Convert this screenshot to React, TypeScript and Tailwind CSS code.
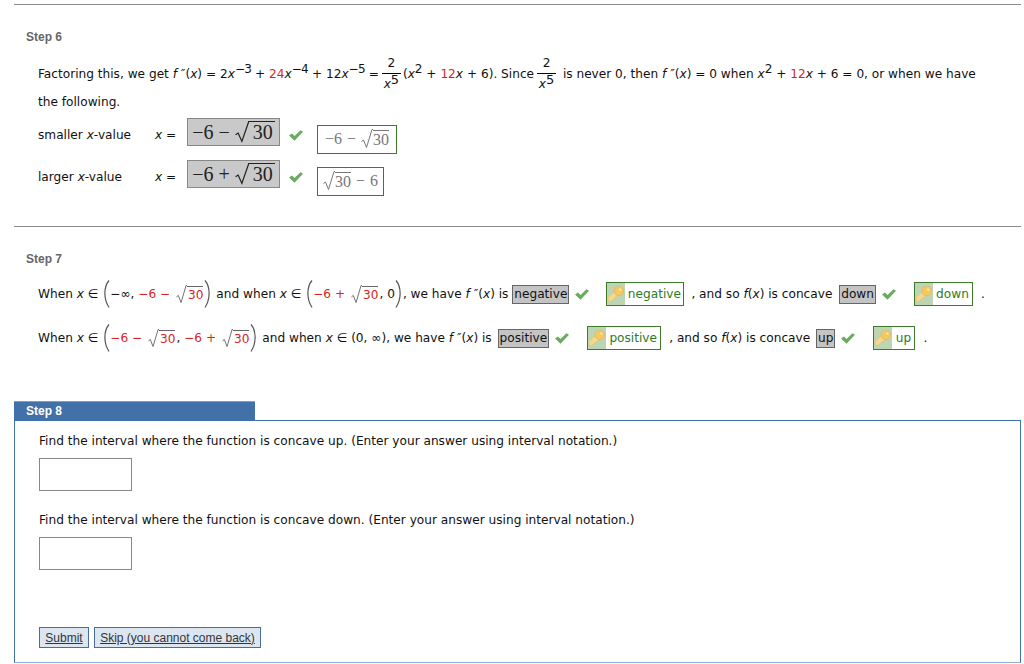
import type { ReactNode } from 'react';

const RED = 'text-[#d7261e]';

function Red({ children }: { children: ReactNode }) {
  return <span className={RED}>{children}</span>;
}

function I({ children }: { children: ReactNode }) {
  return <i>{children}</i>;
}

function Sup({ children }: { children: ReactNode }) {
  return <span className="relative -top-[5px] text-[12px] leading-none">{children}</span>;
}

function NegSup({ children }: { children: ReactNode }) {
  return <span className="relative -top-[5px] text-[12px] leading-none tracking-[-0.7px]">{children}</span>;
}

function Frac({ className = 'mx-[3px]' }: { className?: string }) {
  return (
    <span className={`inline-flex w-[19px] flex-col items-center align-middle leading-none ${className}`}>
      <span className="pb-[3px] leading-[14px]">2</span>
      <span className="h-px w-full bg-black" />
      <span className="pt-[2px] leading-[16px]">
        <i>x</i>
        <span className="relative -top-[4px] text-[13px]">5</span>
      </span>
    </span>
  );
}

function Radical({ w = 12, h = 20, color = 'currentColor' }: { w?: number; h?: number; color?: string }) {
  return (
    <svg width={w} height={h} viewBox="0 0 12 20" preserveAspectRatio="none" className="shrink-0">
      <path d="M0.5 12.5 L2.5 11 L5.5 18.5 L11 0.5 L12 0.5" fill="none" stroke={color} strokeWidth="1" />
    </svg>
  );
}

function Sqrt() {
  return (
    <span className="ml-[2px] mr-[1px] inline-flex items-end align-middle">
      <Radical w={11} h={19} color="#666" />
      <span className="border-t border-[#666] pl-[1px] leading-[17px]">30</span>
    </span>
  );
}

function AnswerSqrt() {
  return (
    <span className="flex items-end">
      <Radical w={12} h={20} color="#777" />
      <span className="border-t border-[#777] leading-[18px]">30</span>
    </span>
  );
}

function Paren({ side }: { side: 'l' | 'r' }) {
  const d = side === 'l' ? 'M7 0.5 C1.5 7 1.5 19 7 27.5' : 'M1 0.5 C6.5 7 6.5 19 1 27.5';
  return (
    <svg width="8" height="28" viewBox="0 0 8 28" className="inline-block shrink-0 align-middle">
      <path d={d} fill="none" stroke="#555" strokeWidth="1.2" />
    </svg>
  );
}

function Check({ className = '' }: { className?: string }) {
  return (
    <svg width="14" height="11" viewBox="0 0 14 11" className={`shrink-0 ${className}`}>
      <path d="M0 5.5 L3 3.5 L5.5 6 L11.5 0.3 L14 1.8 L5.5 10.8 Z" fill="#69ab5f" />
    </svg>
  );
}

function Key() {
  return (
    <svg width="18" height="18" viewBox="0 0 18 18">
      <path d="M8.5 5.5 L1 12.5 L1 16 L4.5 16.5 L5.5 14.8 L7.2 14.6 L7.6 12.8 L9.4 12.4 L12.5 9.5 Z" fill="#f4d88e" stroke="#e2b963" strokeWidth="0.5" />
      <circle cx="11.8" cy="6" r="4.8" fill="#f3c964" stroke="#dfb052" strokeWidth="0.6" />
      <circle cx="13.2" cy="4.6" r="1.2" fill="#fbe9b6" />
    </svg>
  );
}

function Answer({ text, ml, w }: { text: string; ml: string; w: string }) {
  return (
    <span className={`flex h-[24px] items-stretch border border-[#3d7a2c] ${ml} ${w}`}>
      <span className="flex w-[18px] shrink-0 items-center justify-center bg-[#bcd6b4]">
        <Key />
      </span>
      <span className="flex flex-1 items-center justify-center text-[#2f7a1f]">{text}</span>
    </span>
  );
}

function Picked({ text, ml }: { text: string; ml?: string }) {
  return (
    <span className={`flex h-[19px] items-center border border-[#666] bg-[#c4c4c4] px-[1px] ${ml ?? ''}`}>{text}</span>
  );
}

function MathBox({ op }: { op: string }) {
  return (
    <span className="flex h-[28px] w-[93px] items-center justify-center gap-[5px] border border-[#888] bg-[#c9c9c9] font-['Liberation_Serif',serif] text-[20px] leading-none text-[#222]">
      <span>−6</span>
      <span>{op}</span>
      <span className="flex items-end">
        <Radical w={15} h={22} color="#222" />
        <span className="border-t border-[#222] pr-[2px] pl-[3px] leading-[21px]">30</span>
      </span>
    </span>
  );
}

function AnswerBox({ children, w }: { children: ReactNode; w: string }) {
  return (
    <span className={`relative top-[7px] ml-[14px] flex h-[29px] items-center justify-center gap-[5px] border border-[#3d7a2c] font-['Liberation_Serif',serif] text-[16px] leading-none text-[#777] ${w}`}>
      {children}
    </span>
  );
}

function StepTitle({ children, className = '' }: { children: ReactNode; className?: string }) {
  return <div className={`font-['Liberation_Sans',sans-serif] text-[12px] leading-[14px] font-bold ${className}`}>{children}</div>;
}

function Row({ children, className = '' }: { children: ReactNode; className?: string }) {
  return <div className={`flex items-center whitespace-pre ${className}`}>{children}</div>;
}

function Btn({ children, className = '' }: { children: ReactNode; className?: string }) {
  return (
    <button
      type="button"
      className={`h-[21px] border border-[#4a6d9c] bg-[#dce6f0] font-['Liberation_Sans',sans-serif] text-[12px] leading-none text-[#333] underline ${className}`}
    >
      {children}
    </button>
  );
}

export default function App() {
  return (
    <div className="h-[664px] w-[1024px] overflow-hidden bg-white pt-[4px] pr-[3px] pl-[14px] font-['DejaVu_Sans',sans-serif] text-[12.15px] text-[#111]">
      <div className="h-px bg-[#8a8a8a]" />

      <section className="h-[221px] pt-[25px] pl-[12px]">
        <StepTitle className="text-[#666]">Step 6</StepTitle>
        <div className="pl-[12px]">
          <Row className="mt-[10px] h-[40px]">
            Factoring this, we get <I>f ″</I>(<I>x</I>) = 2<I>x</I>
            <NegSup>−3</NegSup> + <Red>24</Red>
            <I>x</I>
            <NegSup>−4</NegSup> + 12<I>x</I>
            <NegSup>−5</NegSup> =<Frac className="mr-[2px] ml-[3px]" />(<I>x</I>
            <Sup>2</Sup> + <Red>12</Red>
            <I>x</I> + 6). Since
            <Frac /> is never 0, then <I>f ″</I>(<I>x</I>) = 0 when <I>x</I>
            <Sup>2</Sup> + <Red>12</Red>
            <I>x</I> + 6 = 0, or when we have
          </Row>
          <Row className="h-[16px]">the following.</Row>
          <Row className="mt-[4px] h-[42px]">
            <span className="w-[117px]">
              smaller <I>x</I>-value
            </span>
            <span className="w-[32px]">
              <I>x</I> =
            </span>
            <span className="-mt-[6px] flex items-center">
              <MathBox op="−" />
              <Check className="relative top-[3px] ml-[9px]" />
              <AnswerBox w="w-[80px]">
                <span>−6</span>
                <span>−</span>
                <AnswerSqrt />
              </AnswerBox>
            </span>
          </Row>
          <Row className="h-[42px]">
            <span className="w-[117px]">
              larger <I>x</I>-value
            </span>
            <span className="w-[32px]">
              <I>x</I> =
            </span>
            <span className="-mt-[6px] flex items-center">
              <MathBox op="+" />
              <Check className="relative top-[3px] ml-[9px]" />
              <AnswerBox w="w-[67px]">
                <AnswerSqrt />
                <span>−</span>
                <span>6</span>
              </AnswerBox>
            </span>
          </Row>
        </div>
      </section>

      <div className="h-px bg-[#8a8a8a]" />

      <section className="h-[174px] pt-[25px] pl-[12px]">
        <StepTitle className="text-[#666]">Step 7</StepTitle>
        <div className="pl-[12px]">
          <Row className="mt-[13px] h-[30px]">
            When <I>x</I> ∈ <Paren side="l" />
            −∞, <Red>−6 − </Red>
            <span className={RED}>
              <Sqrt />
            </span>
            <Paren side="r" /> and when <I>x</I> ∈ <Paren side="l" />
            <Red>−6 + </Red>
            <span className={RED}>
              <Sqrt />
            </span>
            , 0
            <Paren side="r" />, we have <I>f ″</I>(<I>x</I>) is <Picked text="negative" />
            <Check className="ml-[6px]" />
            <Answer text="negative" ml="ml-[17px]" w="w-[78px]" />
            <span className="ml-[7px]">, and so </span>
            <I>f</I>(<I>x</I>) is concave <Picked text="down" ml="ml-[3px]" />
            <Check className="ml-[6px]" />
            <Answer text="down" ml="ml-[18px]" w="w-[59px]" />
            <span className="ml-[8px]">.</span>
          </Row>
          <Row className="mt-[14px] h-[30px]">
            When <I>x</I> ∈ <Paren side="l" />
            <Red>−6 − </Red>
            <span className={RED}>
              <Sqrt />
            </span>
            , <Red>−6 + </Red>
            <span className={RED}>
              <Sqrt />
            </span>
            <Paren side="r" /> and when <I>x</I> ∈ (0, ∞), we have <I>f ″</I>(<I>x</I>) is <Picked text="positive" ml="ml-[2px]" />
            <Check className="ml-[6px]" />
            <Answer text="positive" ml="ml-[18px]" w="w-[74px]" />
            <span className="ml-[8px]">, and so </span>
            <I>f</I>(<I>x</I>) is concave <Picked text="up" ml="ml-[2px]" />
            <Check className="ml-[6px]" />
            <Answer text="up" ml="ml-[18px]" w="w-[42px]" />
            <span className="ml-[8px]">.</span>
          </Row>
        </div>
      </section>

      <section>
        <div className="flex h-[19px] w-[241px] items-center border-t border-[#7f9fc6] bg-[#4270a8] pl-[12px]">
          <StepTitle className="text-white">Step 8</StepTitle>
        </div>
        <div className="h-[243px] border border-t-[#4270a8] border-r-[#4270a8] border-b-[#8fadd0] border-l-[#4270a8] pt-[12px] pl-[24px]">
          <div className="h-[16px] leading-[16px]">
            Find the interval where the function is concave up. (Enter your answer using interval notation.)
          </div>
          <input type="text" className="mt-[9px] block h-[33px] w-[93px] border border-[#888] bg-white" />
          <div className="mt-[21px] h-[16px] leading-[16px]">
            Find the interval where the function is concave down. (Enter your answer using interval notation.)
          </div>
          <input type="text" className="mt-[9px] block h-[33px] w-[93px] border border-[#888] bg-white" />
          <div className="mt-[57px] flex gap-[5px]">
            <Btn className="w-[50px]">Submit</Btn>
            <Btn className="w-[167px]">Skip (you cannot come back)</Btn>
          </div>
        </div>
      </section>
    </div>
  );
}
